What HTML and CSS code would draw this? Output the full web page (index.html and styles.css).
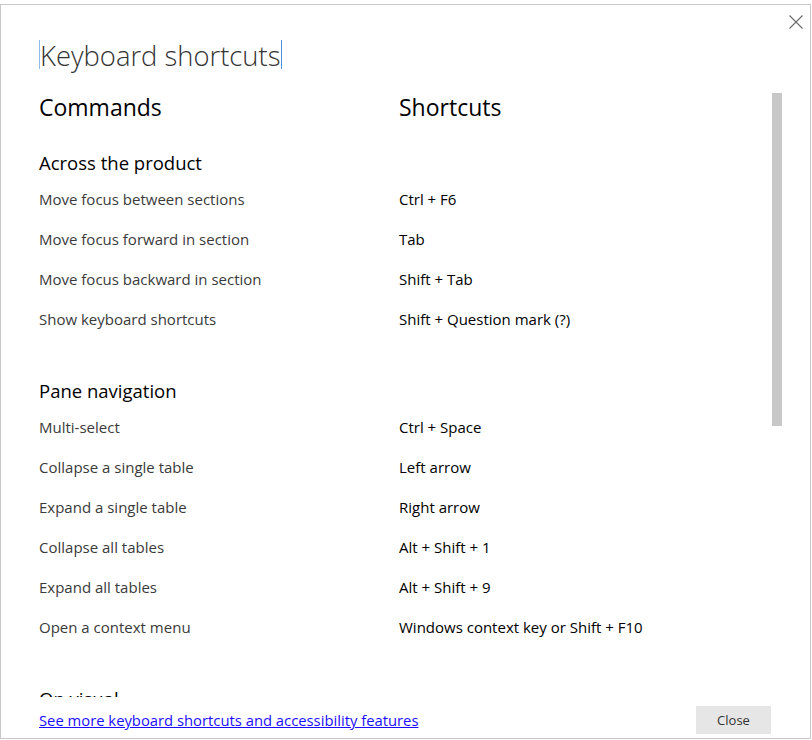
FILE: index.html
```html
<!DOCTYPE html>
<html lang="en">
<head>
<meta charset="utf-8">
<title>Keyboard shortcuts</title>
<link rel="stylesheet" href="styles.css">
</head>
<body>
<div class="dialog" role="dialog" aria-labelledby="dlg-title">
  <button class="close-x" aria-label="Close">
    <svg width="14" height="14" viewBox="0 0 14 14" aria-hidden="true"><path d="M0.5 0.5 L13.5 13.5 M13.5 0.5 L0.5 13.5" stroke="#6b6b6b" stroke-width="1.1" fill="none"/></svg>
  </button>
  <header class="dlg-header">
    <h1 class="title" id="dlg-title"><span class="title-box">Keyboard shortcuts</span></h1>
  </header>
  <div class="scroll">
    <div class="scroll-content">
      <div class="cols-head">
        <div class="col-cmd">Commands</div>
        <div class="col-key">Shortcuts</div>
      </div>

      <section class="section">
        <h2 class="sec-title">Across the product</h2>
        <div class="row"><div class="cmd">Move focus between sections</div><div class="key">Ctrl + F6</div></div>
        <div class="row"><div class="cmd">Move focus forward in section</div><div class="key">Tab</div></div>
        <div class="row"><div class="cmd">Move focus backward in section</div><div class="key">Shift + Tab</div></div>
        <div class="row"><div class="cmd">Show keyboard shortcuts</div><div class="key">Shift + Question mark (?)</div></div>
      </section>

      <section class="section">
        <h2 class="sec-title">Pane navigation</h2>
        <div class="row"><div class="cmd">Multi-select</div><div class="key">Ctrl + Space</div></div>
        <div class="row"><div class="cmd">Collapse a single table</div><div class="key">Left arrow</div></div>
        <div class="row"><div class="cmd">Expand a single table</div><div class="key">Right arrow</div></div>
        <div class="row"><div class="cmd">Collapse all tables</div><div class="key">Alt + Shift + 1</div></div>
        <div class="row"><div class="cmd">Expand all tables</div><div class="key">Alt + Shift + 9</div></div>
        <div class="row"><div class="cmd">Open a context menu</div><div class="key">Windows context key or Shift + F10</div></div>
      </section>

      <section class="section">
        <h2 class="sec-title">On visual</h2>
        <div class="row"><div class="cmd">Move focus to visual menu</div><div class="key">Alt + Shift + F10</div></div>
        <div class="row"><div class="cmd">Show data</div><div class="key">Alt + Shift + F11</div></div>
        <div class="row"><div class="cmd">Enter a visual</div><div class="key">Ctrl + Right arrow</div></div>
      </section>
    </div>
    <div class="scrollbar" aria-hidden="true"><div class="thumb"></div></div>
  </div>
  <footer class="dlg-footer">
    <a class="more-link" href="#">See more keyboard shortcuts and accessibility features</a>
    <button class="btn-close">Close</button>
  </footer>
</div>
</body>
</html>
```

FILE: styles.css
```css
* { box-sizing: border-box; }

html, body {
  margin: 0;
  padding: 0;
  background: #ffffff;
}

body {
  font-family: "Open Sans", "Noto Sans", "Liberation Sans", sans-serif;
  color: #333333;
  height: 740px;
  overflow: hidden;
}

.dialog {
  position: relative;
  margin-top: 4px;
  width: 811px;
  height: 735px;
  border: 1px solid #c8c8c8;
  background: #ffffff;
  display: flex;
  flex-direction: column;
}

.close-x {
  position: absolute;
  top: 10px;
  right: 7px;
  width: 14px;
  height: 14px;
  padding: 0;
  border: 0;
  background: transparent;
  display: flex;
}

.dlg-header {
  padding: 35px 0 23px 38px;
  flex: none;
}

.title {
  margin: 0;
  font-size: 27.4px;
  font-weight: 300;
  color: #333333;
  height: 29px;
  line-height: 29px;
}

.title-box {
  display: inline-block;
  height: 29px;
  line-height: 32px;
  border-left: 1px solid #8dbbe8;
  border-right: 1px solid #4a90e2;
  padding-right: 1px;
  white-space: nowrap;
}

.scroll {
  flex: 1;
  min-height: 0;
  display: flex;
  margin-right: 28px;
}

.scroll-content {
  flex: 1;
  min-width: 0;
  overflow: hidden;
  padding-left: 38px;
}

.scrollbar {
  flex: none;
  width: 10px;
  padding-top: 1px;
}

.thumb {
  height: 333px;
  background: #c8c8c8;
}

.cols-head {
  display: grid;
  grid-template-columns: 360px 1fr;
  font-size: 23px;
  line-height: 30px;
  color: #000000;
}

.section:first-of-type { margin-top: 27px; }
.section + .section { margin-top: 38px; }

.sec-title {
  margin: 0 0 2px 0;
  font-size: 18.5px;
  font-weight: 400;
  line-height: 28px;
  color: #000000;
}

.row {
  display: grid;
  grid-template-columns: 360px 1fr;
  height: 40px;
  line-height: 40px;
  font-size: 15px;
  white-space: nowrap;
}

.cmd {
  color: #3a3a3a;
}

.key {
  color: #000000;
}

.dlg-footer {
  flex: none;
  height: 41px;
  padding: 9px 39px 4px 38px;
  display: flex;
  align-items: center;
  justify-content: space-between;
}

.more-link {
  font-size: 14.8px;
  line-height: 20px;
  color: #1a0dff;
  text-decoration: underline;
}

.btn-close {
  width: 75px;
  height: 28px;
  border: 0;
  background: #e6e6e6;
  color: #333333;
  font-family: inherit;
  font-size: 13px;
  padding: 0;
}
```
